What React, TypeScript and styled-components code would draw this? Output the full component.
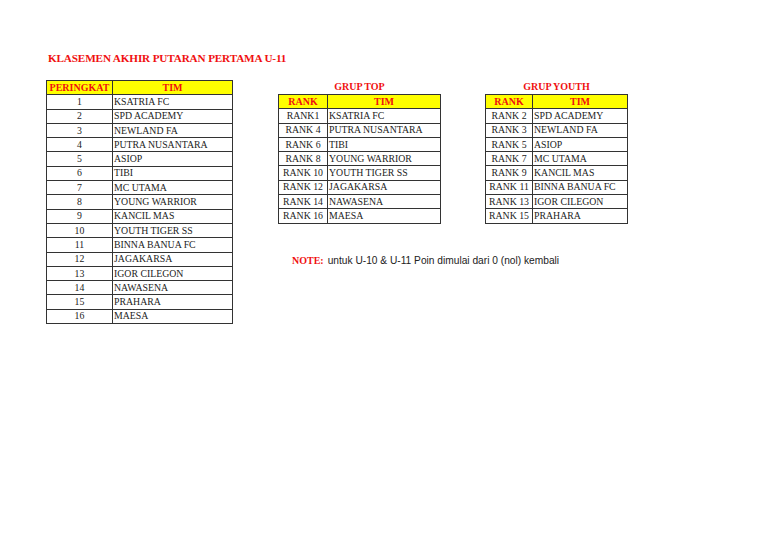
import React from "react";
import styled, { createGlobalStyle } from "styled-components";

const GlobalStyle = createGlobalStyle`
  html, body {
    margin: 0;
    padding: 0;
    background: #fff;
  }
  body {
    font-family: "Liberation Serif", "DejaVu Serif", serif;
    color: #222;
  }
`;

const Page = styled.div`
  width: 768px;
  height: 543px;
  padding: 51px 0 0 46px;
  box-sizing: border-box;
`;

const Title = styled.div`
  font-weight: bold;
  font-size: 11.2px;
  letter-spacing: -0.15px;
  color: #f01010;
  height: 14px;
  line-height: 14px;
  padding-left: 2px;
  margin-bottom: 15px;
`;

const Content = styled.div`
  display: flex;
  align-items: flex-start;
`;

const RightArea = styled.div`
  margin-left: 45px;
  display: flex;
  flex-direction: column;
`;

const Groups = styled.div`
  display: flex;
  align-items: flex-start;
  gap: 44px;
`;

const Group = styled.div`
  display: flex;
  flex-direction: column;
`;

const GroupTitle = styled.div`
  font-weight: bold;
  font-size: 10px;
  color: #f01010;
  text-align: center;
  height: 14px;
  line-height: 14px;
`;

const Table = styled.table<{ $w: number }>`
  border-collapse: collapse;
  table-layout: fixed;
  width: ${(p) => p.$w}px;
  font-size: 9.8px;
  border: 1px solid #333;
`;

const Row = styled.tr`
  height: 14.3px;
`;

const HeadCell = styled.th<{ $w?: number }>`
  background: #ffff00;
  color: #f01010;
  font-weight: bold;
  font-size: 10px;
  text-align: center;
  border: 1px solid #333;
  padding: 0;
  line-height: 12px;
  ${(p) => (p.$w ? `width: ${p.$w}px;` : "")}
`;

const Cell = styled.td<{ $center?: boolean }>`
  border: 1px solid #333;
  padding: 0 1px;
  line-height: 12px;
  text-align: ${(p) => (p.$center ? "center" : "left")};
  white-space: nowrap;
  overflow: hidden;
`;

const Note = styled.div`
  margin-top: 30px;
  padding-left: 14px;
  font-size: 10.2px;
  line-height: 14px;
  font-family: "Liberation Sans", Arial, sans-serif;
  color: #222;
`;

const NoteLabel = styled.span`
  font-family: "Liberation Serif", serif;
  font-weight: bold;
  font-size: 10px;
  color: #f01010;
  margin-right: 4px;
`;

const standings = [
  "KSATRIA FC",
  "SPD ACADEMY",
  "NEWLAND FA",
  "PUTRA NUSANTARA",
  "ASIOP",
  "TIBI",
  "MC UTAMA",
  "YOUNG WARRIOR",
  "KANCIL MAS",
  "YOUTH TIGER SS",
  "BINNA BANUA FC",
  "JAGAKARSA",
  "IGOR CILEGON",
  "NAWASENA",
  "PRAHARA",
  "MAESA",
];

const grupTop: [string, string][] = [
  ["RANK1", "KSATRIA FC"],
  ["RANK 4", "PUTRA NUSANTARA"],
  ["RANK 6", "TIBI"],
  ["RANK 8", "YOUNG WARRIOR"],
  ["RANK 10", "YOUTH TIGER SS"],
  ["RANK 12", "JAGAKARSA"],
  ["RANK 14", "NAWASENA"],
  ["RANK 16", "MAESA"],
];

const grupYouth: [string, string][] = [
  ["RANK 2", "SPD ACADEMY"],
  ["RANK 3", "NEWLAND FA"],
  ["RANK 5", "ASIOP"],
  ["RANK 7", "MC UTAMA"],
  ["RANK 9", "KANCIL MAS"],
  ["RANK 11", "BINNA BANUA FC"],
  ["RANK 13", "IGOR CILEGON"],
  ["RANK 15", "PRAHARA"],
];

const GroupTable: React.FC<{
  title: string;
  rows: [string, string][];
  width: number;
  rankWidth: number;
}> = ({ title, rows, width, rankWidth }) => (
  <Group>
    <GroupTitle>{title}</GroupTitle>
    <Table $w={width}>
      <thead>
        <Row>
          <HeadCell $w={rankWidth}>RANK</HeadCell>
          <HeadCell>TIM</HeadCell>
        </Row>
      </thead>
      <tbody>
        {rows.map(([rank, team]) => (
          <Row key={rank}>
            <Cell $center>{rank}</Cell>
            <Cell>{team}</Cell>
          </Row>
        ))}
      </tbody>
    </Table>
  </Group>
);

export default function App() {
  return (
    <Page>
      <GlobalStyle />
      <Title>KLASEMEN AKHIR PUTARAN PERTAMA U-11</Title>
      <Content>
        <Table $w={187}>
          <thead>
            <Row>
              <HeadCell $w={65}>PERINGKAT</HeadCell>
              <HeadCell>TIM</HeadCell>
            </Row>
          </thead>
          <tbody>
            {standings.map((team, i) => (
              <Row key={team}>
                <Cell $center>{i + 1}</Cell>
                <Cell>{team}</Cell>
              </Row>
            ))}
          </tbody>
        </Table>
        <RightArea>
          <Groups>
            <GroupTable title="GRUP TOP" rows={grupTop} width={163} rankWidth={48} />
            <GroupTable title="GRUP YOUTH" rows={grupYouth} width={143} rankWidth={46} />
          </Groups>
          <Note>
            <NoteLabel>NOTE:</NoteLabel>
            untuk U-10 &amp; U-11 Poin dimulai dari 0 (nol) kembali
          </Note>
        </RightArea>
      </Content>
    </Page>
  );
}
